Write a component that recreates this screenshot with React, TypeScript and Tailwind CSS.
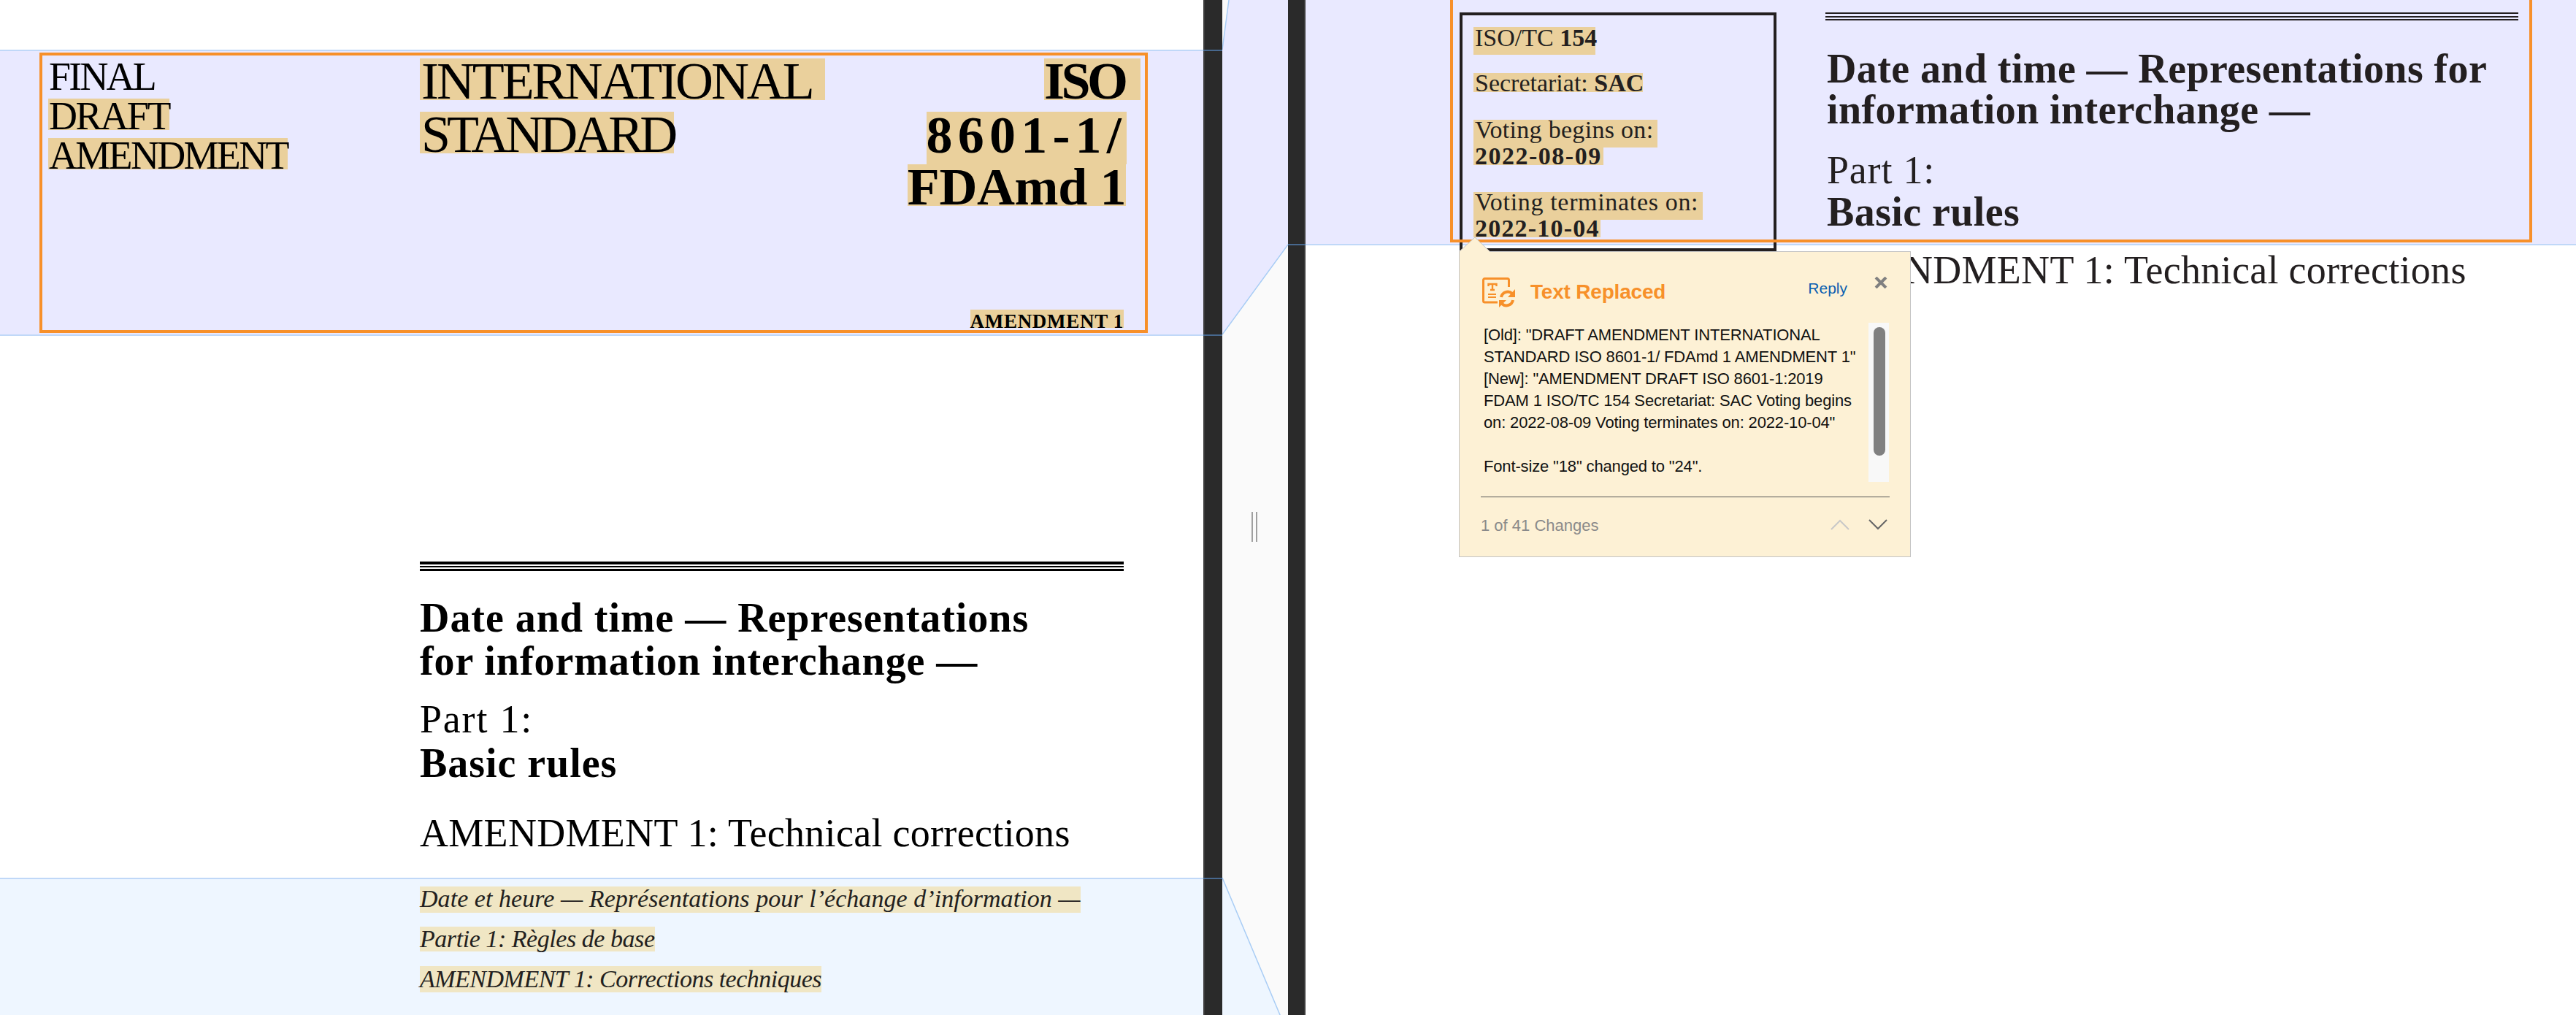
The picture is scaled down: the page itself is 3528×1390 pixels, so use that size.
const serif = "[font-family:'Liberation_Serif',serif]";
const sans = "[font-family:'Liberation_Sans',Arial,sans-serif]";
const mark = "block whitespace-pre bg-[#EAD09C] text-black";
const boxMark = "block whitespace-pre bg-[#EAD09C] text-[#231F20] text-[34px]";
const frenchMark = "block whitespace-pre bg-[#F0E6C4] text-[#231F20] italic text-[34px]";

function LeftPane() {
  return (
    <div className={`w-[1648px] h-full flex flex-col shrink-0 ${serif}`}>
      <div className="h-[68px] shrink-0 bg-white" />

      <div className="h-[392px] shrink-0 bg-[#E9E9FF] border-y-2 border-[#C0D8F8] pt-[2px] pl-[54px]">
        <div className="w-[1518px] h-[384px] border-4 border-[#F7902A] pt-[4px] pl-[8px] flex">
          <div className="w-[509px] shrink-0 pt-[1px] flex flex-col items-start gap-[11px]">
            <span className="block h-[43px] leading-[48px] text-[54px] text-black pl-[1px] tracking-[-2.8px]">FINAL</span>
            <span className={`${mark} h-[43px] leading-[48px] text-[54px] pl-[1px] tracking-[-2.4px]`}>DRAFT</span>
            <span className={`${mark} h-[43px] leading-[48px] text-[54px] pl-[1px] tracking-[-2.7px]`}>AMENDMENT</span>
          </div>

          <div className="w-[620px] shrink-0 flex flex-col items-start gap-[16px]">
            <span className={`${mark} w-[555px] h-[57px] leading-[63px] text-[72px] pl-[2px] tracking-[-3.1px]`}>INTERNATIONAL</span>
            <span className={`${mark} h-[57px] leading-[63px] text-[72px] pl-[2px] tracking-[-5px]`}>STANDARD</span>
          </div>

          <div className="flex-1 flex flex-col items-end font-bold pb-[3px]">
            <span className={`${mark} w-[132px] h-[57px] leading-[63px] text-[72px] tracking-[-4.5px] mr-[6px]`}>ISO</span>
            <span className={`${mark} h-[72px] leading-[65px] text-[72px] tracking-[7.2px] mt-[16px] mr-[25px]`}>8601-1/</span>
            <span className={`${mark} h-[57px] leading-[63px] text-[72px] tracking-[-0.4px] mr-[26px]`}>FDAmd 1</span>
            <span className={`${mark} h-[25px] leading-[32px] text-[27px] tracking-[0.7px] mt-auto mr-[29px]`}>AMENDMENT 1</span>
          </div>
        </div>
      </div>

      <div className="h-[742px] shrink-0 bg-white pl-[575px] text-black">
        <div className="w-[964px] mt-[309px] flex flex-col gap-[2px]">
          <div className="h-[4px] bg-black" />
          <div className="h-[2px] bg-black" />
          <div className="h-[3px] bg-black" />
        </div>
        <h1 className="mt-[35px] text-[56px] leading-[59px] font-bold tracking-[0.95px] whitespace-nowrap">
          Date and time — Representations
          <br />
          for information interchange —
        </h1>
        <p className="mt-[20px] text-[54px] leading-[60px] tracking-[1.8px]">Part 1:</p>
        <p className="text-[56px] leading-[60px] font-bold tracking-[0.95px]">Basic rules</p>
        <p className="mt-[36px] text-[54px] leading-[60px] tracking-[0.3px] whitespace-nowrap">AMENDMENT 1: Technical corrections</p>
      </div>

      <div className="flex-1 bg-[#EEF6FF] border-t-2 border-[#C0D8F8] pt-[10px] pl-[575px] flex flex-col items-start">
        <span className={`${frenchMark} h-[36px] leading-[34px] tracking-[0.05px]`}>Date et heure — Représentations pour l’échange d’information —</span>
        <span className={`${frenchMark} h-[34px] leading-[33px] mt-[19px] tracking-[-0.45px]`}>Partie 1: Règles de base</span>
        <span className={`${frenchMark} h-[36px] leading-[36px] mt-[20px] tracking-[-0.5px]`}>AMENDMENT 1: Corrections techniques</span>
      </div>
    </div>
  );
}

function Connector() {
  return (
    <div className="relative w-[90px] h-full shrink-0 bg-[#FAFAFA]">
      <svg width="90" height="1390" viewBox="0 0 90 1390" className="absolute inset-0">
        <polygon points="0,68 90,-612 90,335 0,458" fill="#E9E9FF" />
        <polygon points="0,1202 90,1416 0,1416" fill="#EEF6FF" />
        <line x1="0" y1="68" x2="90" y2="-612" stroke="#A9CDF5" strokeWidth="1.5" />
        <line x1="0" y1="458" x2="90" y2="335" stroke="#A9CDF5" strokeWidth="1.5" />
        <line x1="0" y1="1202" x2="90" y2="1416" stroke="#A9CDF5" strokeWidth="1.5" />
      </svg>
      <div className="absolute left-[40px] top-[701px] h-[41px] w-[8px] border-x-[2px] border-[#A0A0A0]" />
    </div>
  );
}

function ReplacedIcon() {
  return (
    <svg width="46" height="41" viewBox="0 0 46 41" fill="none" stroke="#F7902A" className="shrink-0">
      <path d="M21 34H3.5A2 2 0 0 1 1.5 32V3.5A2 2 0 0 1 3.5 1.5H34.5A2 2 0 0 1 36.5 3.5V13" strokeWidth="3" />
      <path d="M8.5 12V9H19.5V12M14 9V17M11 17H17" strokeWidth="2.4" />
      <path d="M8 23H19M8 27H19" strokeWidth="2" />
      <path d="M26 27A9 9 0 0 1 41 22" strokeWidth="4" />
      <path d="M42 31A9 9 0 0 1 27 36" strokeWidth="4" />
      <polygon points="45,16 45,27 35,27" fill="#F7902A" stroke="none" />
      <polygon points="23,41 23,31 33,31" fill="#F7902A" stroke="none" />
    </svg>
  );
}

function ChangePopup() {
  return (
    <div className={`absolute left-[210px] top-[344px] w-[619px] h-[419px] bg-[#FDF1D5] border border-[#C4C4C4] ${sans}`}>
      <svg width="46" height="20" viewBox="0 0 46 20" className="absolute left-[-1px] top-[-20px]">
        <polygon points="0,20 22,0 43,20" fill="#FDF1D5" />
        <path d="M0 20L22 0L43 20" fill="none" stroke="#C4C4C4" />
      </svg>

      <div className="h-[97px] pl-[31px] pt-[35px] flex items-start">
        <ReplacedIcon />
        <span className="ml-[20px] mt-[4px] text-[28px] leading-[32px] font-bold text-[#F7902A] tracking-[-0.2px]">Text Replaced</span>
        <span className="ml-auto mr-[37px] -mt-[1px] text-[21px] leading-[32px] text-[#0A5FB0]">Reply</span>
        <svg width="18" height="16" viewBox="0 0 18 16" className="mr-[31px] -mt-[1px]" stroke="#808080" strokeWidth="4">
          <path d="M2 1L16 15M16 1L2 15" />
        </svg>
      </div>

      <div className="h-[218px] flex items-stretch pl-[33px] pr-[29px]">
        <div className="flex-1 pt-[2px] text-[22px] leading-[30px] text-[#111111] tracking-[-0.15px] whitespace-nowrap">
          <p>[Old]: "DRAFT AMENDMENT INTERNATIONAL</p>
          <p>STANDARD ISO 8601-1/ FDAmd 1 AMENDMENT 1"</p>
          <p>[New]: "AMENDMENT DRAFT ISO 8601-1:2019</p>
          <p>FDAM 1 ISO/TC 154 Secretariat: SAC Voting begins</p>
          <p>on: 2022-08-09 Voting terminates on: 2022-10-04"</p>
          <p className="mt-[30px]">Font-size "18" changed to "24".</p>
        </div>
        <div className="w-[28px] shrink-0 bg-[#F8F8F8] pl-[7px] pt-[6px]">
          <div className="w-[16px] h-[176px] rounded-full bg-[#808080]" />
        </div>
      </div>

      <div className="mt-[20px] ml-[29px] w-[560px] h-[1px] bg-[#555555]" />

      <div className="ml-[29px] mr-[31px] mt-[25px] flex items-center text-[22px] leading-[28px] text-[#8A8A8A]">
        <span>1 of 41 Changes</span>
        <svg width="26" height="15" viewBox="0 0 26 15" className="ml-auto -mt-[4px]" fill="none" stroke="#C8C8C8" strokeWidth="2">
          <path d="M1 14L13 2L25 14" />
        </svg>
        <svg width="26" height="15" viewBox="0 0 26 15" className="ml-[26px] -mt-[4px]" fill="none" stroke="#666666" strokeWidth="2">
          <path d="M1 1L13 13L25 1" />
        </svg>
      </div>
    </div>
  );
}

function RightPane() {
  return (
    <div className={`relative flex-1 h-full bg-white ${serif}`}>
      <div className="h-[336px] bg-[#E9E9FF] border-b-2 border-[#C0D8F8] flex items-start text-[#231F20]">
        <div className="w-[434px] h-[327px] shrink-0 mt-[17px] ml-[211px] border-4 border-[#231F20] pl-[15px] pt-[16px] flex flex-col items-start">
          <span className={`${boxMark} w-[167px] h-[38px] leading-[29px] pl-[2px]`}>ISO/TC <b>154</b></span>
          <span className={`${boxMark} w-[232px] h-[26px] leading-[28px] mt-[25px] pl-[2px]`}>Secretariat: <b>SAC</b></span>
          <span className={`${boxMark} w-[252px] h-[38px] leading-[28px] mt-[38px] pl-[2px] tracking-[0.3px]`}>Voting begins on:</span>
          <span className={`${boxMark} w-[178px] h-[24px] leading-[24px] pl-[2px] font-bold tracking-[1.5px]`}>2022-08-09</span>
          <span className={`${boxMark} w-[314px] h-[38px] leading-[28px] mt-[37px] pl-[2px] tracking-[0.67px]`}>Voting terminates on:</span>
          <span className={`${boxMark} w-[174px] h-[24px] leading-[24px] pl-[2px] font-bold tracking-[1.2px]`}>2022-10-04</span>
        </div>

        <div className="w-[949px] shrink-0 ml-[67px] mt-[17px]">
          <div className="flex flex-col">
            <div className="h-[2px] bg-[#231F20]" />
            <div className="h-[2px] mt-[3px] bg-[#231F20]" />
            <div className="h-[2px] mt-[2px] bg-[#231F20]" />
          </div>
          <h1 className="mt-[38px] pl-[2px] text-[56px] leading-[56px] font-bold tracking-[0.4px] whitespace-nowrap">
            Date and time — Representations for
            <br />
            information interchange —
          </h1>
          <p className="mt-[27px] pl-[2px] text-[54px] leading-[57px] tracking-[0.8px]">Part 1:</p>
          <p className="pl-[2px] text-[56px] leading-[57px] font-bold tracking-[0.4px]">Basic rules</p>
        </div>
      </div>

      <p className="pl-[699px] pt-[4px] text-[54px] leading-[60px] tracking-[0.3px] text-[#231F20] whitespace-nowrap">
        AMENDMENT 1: Technical corrections
      </p>

      {/* change highlight sits over the page, its top runs off the view */}
      <div className="absolute left-[198px] top-[-8px] w-[1482px] h-[340px] border-4 border-[#F7902A] pointer-events-none" />

      <ChangePopup />
    </div>
  );
}

export default function App() {
  return (
    <div className="w-[3528px] h-[1390px] flex overflow-hidden bg-white">
      <LeftPane />
      <div className="relative w-[26px] h-full shrink-0 bg-[#2A2A2A] border-l-2 border-[#3C3C3C]">
        <div className="absolute left-[-2px] right-0 top-[68px] h-[2px] bg-[#47688E]" />
        <div className="absolute left-[-2px] right-0 top-[458px] h-[2px] bg-[#47688E]" />
        <div className="absolute left-[-2px] right-0 top-[1202px] h-[2px] bg-[#47688E]" />
      </div>
      <Connector />
      <div className="relative w-[24px] h-full shrink-0 bg-[#2A2A2A] border-r-2 border-[#3C3C3C]">
        <div className="absolute left-0 right-[-2px] top-[334px] h-[2px] bg-[#47688E]" />
      </div>
      <RightPane />
    </div>
  );
}
